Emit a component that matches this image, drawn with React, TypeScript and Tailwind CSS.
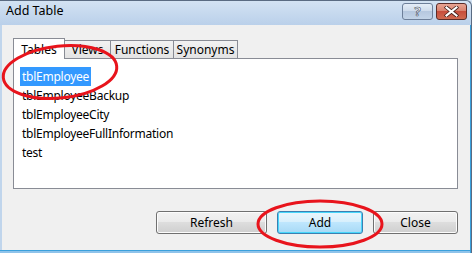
import React from "react";

function Tab({ label, selected, w }: { label: string; selected?: boolean; w: string }) {
  if (selected) {
    return (
      <div
        className={`${w} h-[21px] relative z-10 -mb-px border border-[#898c95] border-b-0 bg-white flex items-center justify-center`}
      >
        <span className="mt-[1px]">{label}</span>
      </div>
    );
  }
  return (
    <div
      className={`${w} h-[18px] -ml-px border border-[#898c95] border-b-0 bg-gradient-to-b from-[#f2f2f2] to-[#e3e3e3] flex items-center justify-center`}
    >
      {label}
    </div>
  );
}

function Button({ label, w, def }: { label: string; w: string; def?: boolean }) {
  return (
    <div
      className={`${w} h-[23px] rounded-[3px] border flex items-center justify-center ${
        def
          ? "border-[#3c7fb1] bg-[linear-gradient(#eaf6fd_0%,#d9f0fc_45%,#bee6fd_50%,#a7d9f5_100%)] shadow-[inset_0_0_0_1px_#48d7fb]"
          : "border-[#707070] bg-[linear-gradient(#f2f2f2_0%,#ebebeb_45%,#dddddd_50%,#cfcfcf_100%)] shadow-[inset_0_0_0_1px_#fcfcfc]"
      }`}
    >
      {label}
    </div>
  );
}

export default function App() {
  const items = [
    "tblEmployee",
    "tblEmployeeBackup",
    "tblEmployeeCity",
    "tblEmployeeFullInformation",
    "test",
  ];
  return (
    <div
      className="relative w-[472px] h-[253px] overflow-hidden bg-[#c0d5ec] text-[12px] text-black"
      style={{ fontFamily: '"Noto Sans", "Segoe UI", sans-serif' }}
    >
      <div className="absolute inset-0 rounded-tr-[6px] border-r border-t border-[#5a6b82] pointer-events-none z-20" />
      <div className="flex flex-col h-full">
        {/* title bar */}
        <div className="h-[25px] flex items-center justify-between bg-gradient-to-b from-[#d4e3f3] to-[#bad0ea] pl-[6px] pr-[5px]">
          <span className="text-[12.5px] leading-none -mt-[2px]">Add Table</span>
          <div className="flex items-center gap-[3px] -mt-[3px]">
            <div className="w-[31px] h-[17px] rounded-[3px] border border-[#6d7f99] bg-[linear-gradient(#e4edf7_0%,#cfdcec_45%,#b6c8df_50%,#c3d4e8_100%)] flex items-center justify-center">
              <span
                className="text-[13px] font-bold leading-none text-white"
                style={{ WebkitTextStroke: "0.6px #3b4a60" }}
              >
                ?
              </span>
            </div>
            <div className="w-[31px] h-[17px] rounded-[3px] border border-[#5b2c28] bg-[linear-gradient(#e8a493_0%,#d9826f_45%,#c74e3c_50%,#cf6a51_100%)] flex items-center justify-center">
              <svg width="15" height="11" viewBox="0 0 15 11">
                <path
                  d="M2.5 1.5 L12.5 9.5 M12.5 1.5 L2.5 9.5"
                  stroke="#3b1a16"
                  strokeWidth="3.6"
                  strokeLinecap="square"
                />
                <path
                  d="M2.5 1.5 L12.5 9.5 M12.5 1.5 L2.5 9.5"
                  stroke="#ffffff"
                  strokeWidth="2.2"
                  strokeLinecap="square"
                />
              </svg>
            </div>
          </div>
        </div>
        {/* client area */}
        <div className="flex-1 ml-[2px] mr-[2px] mb-[3px] bg-[#f0f0f0] flex flex-col pl-[11px] pr-[12px] pt-[12px]">
          <div className="flex items-end h-[21px]">
            <Tab label="Tables" selected w="w-[52px]" />
            <Tab label="Views" w="w-[47px]" />
            <Tab label="Functions" w="w-[64px]" />
            <Tab label="Synonyms" w="w-[65px]" />
          </div>
          <div className="h-[131px] border border-[#898c95] bg-white pt-[8px] pl-[6px] tracking-[-0.25px]">
            {items.map((t, i) => (
              <div key={t} className="h-[19px] flex items-center">
                <span
                  className={`px-[2px] h-[19px] flex items-center ${
                    i === 0 ? "bg-[#3399ff] text-white" : ""
                  }`}
                >
                  {t}
                </span>
              </div>
            ))}
          </div>
          <div className="flex justify-end gap-[10px] mt-[22px]">
            <Button label="Refresh" w="w-[111px]" />
            <Button label="Add" w="w-[86px]" def />
            <Button label="Close" w="w-[85px]" />
          </div>
        </div>
      </div>
      <div className="absolute left-0 right-0 bottom-0 h-[3px] bg-[#8fc3ea] border-t border-[#3aa0dc]" />
      <div className="absolute top-[25px] bottom-0 right-0 w-[2px] bg-[#3aa0dc]" />
      <svg
        className="absolute inset-0 pointer-events-none z-30"
        width="472"
        height="253"
        viewBox="0 0 472 253"
      >
        <ellipse
          cx="60"
          cy="72"
          rx="57"
          ry="26"
          transform="rotate(-6 60 72)"
          fill="none"
          stroke="#e8141c"
          strokeWidth="3"
        />
        <ellipse
          cx="320"
          cy="224"
          rx="62"
          ry="23"
          fill="none"
          stroke="#e8141c"
          strokeWidth="3"
        />
      </svg>
    </div>
  );
}
